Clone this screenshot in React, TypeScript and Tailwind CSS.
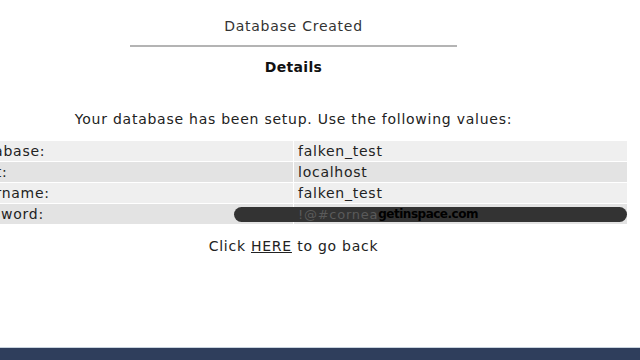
import React from "react";

const rows = [
  { label: "Database:", value: "falken_test", bg: "bg-[#efefef]" },
  { label: "Host:", value: "localhost", bg: "bg-[#e3e3e3]" },
  { label: "Username:", value: "falken_test", bg: "bg-[#efefef]" },
  { label: "Password:", value: "", bg: "bg-[#e3e3e3]" },
];

export default function App() {
  return (
    <div
      className="w-[640px] h-[360px] bg-white overflow-hidden flex flex-col text-[14px] tracking-[0.75px] text-[#222]"
      style={{ fontFamily: '"DejaVu Sans", Verdana, sans-serif' }}
    >
      <div className="flex-1">
        <div className="ml-[-40px] w-[667px] flex flex-col items-center">
          <div className="mt-[17px] h-[18px] leading-[18px] text-[#333]">Database Created</div>
          <div className="mt-[10px] w-[327px] h-[2px] bg-[#b4b4b4]" />
          <div className="mt-[11px] h-[18px] leading-[18px] font-bold tracking-[0.3px] text-[#111]">Details</div>
          <div className="mt-[34px] h-[18px] leading-[18px] text-[#222]">
            Your database has been setup. Use the following values:
          </div>
          <div className="mt-[13px] w-full grid grid-cols-[333px_333px] gap-[1px] relative">
            {rows.map((r, i) => (
              <React.Fragment key={i}>
                <div className={`h-[20px] ${r.bg} pl-[7px] leading-[20px] whitespace-nowrap`}>{r.label}</div>
                <div className={`h-[20px] ${r.bg} pl-[4px] leading-[20px] whitespace-nowrap`}>{r.value}</div>
              </React.Fragment>
            ))}
            <div className="absolute left-[274px] top-[66px] w-[393px] h-[15px] rounded-full bg-[#333333] flex items-center pl-[64px] leading-[15px] whitespace-nowrap">
              <span className="text-[#5a5a5a] text-[13px]">!@#cornea</span>
              <span className="text-black font-bold text-[12px] tracking-[-0.5px]">getinspace.com</span>
            </div>
          </div>
          <div className="mt-[13px] h-[18px] leading-[18px] text-[#222]">
            Click <span className="underline">HERE</span> to go back
          </div>
        </div>
      </div>
      <div className="h-[1px] bg-[#c8d3de]" />
      <div className="h-[12px] bg-[#2f3e5c]" />
    </div>
  );
}
